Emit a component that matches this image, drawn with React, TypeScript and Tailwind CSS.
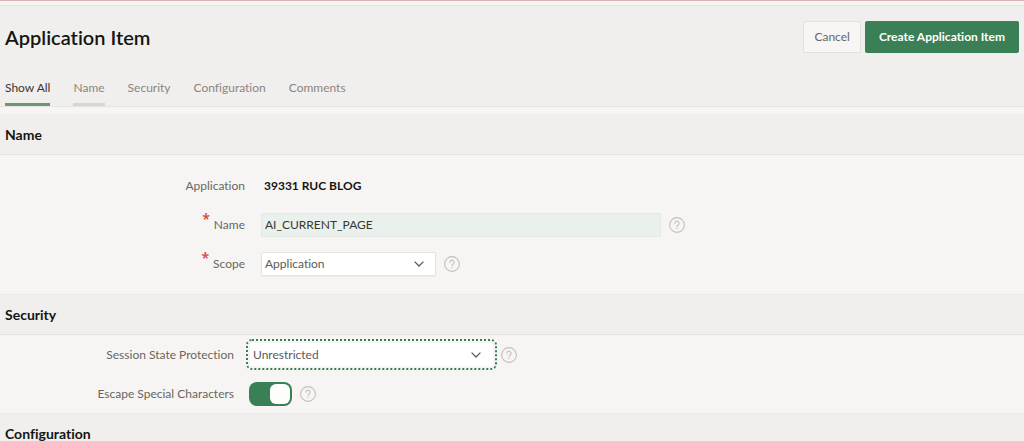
import { useState } from "react";
import type { ReactNode } from "react";

const tabs = ["Show All", "Name", "Security", "Configuration", "Comments"];

const tabClassNames = {
  active: "border-[#6b9a6c] text-[#3a3632]",
  hovered: "border-[#d9d5d1] text-[#8b8580]",
  idle: "border-transparent text-[#8b8580]",
};

const HelpButton = ({ label }: { label: string }) => (
  <button
    type="button"
    aria-label={`Help: ${label}`}
    className="flex-none text-[#c4c0bc]"
  >
    <svg viewBox="0 0 16 16" className="block h-4 w-4" fill="none">
      <circle cx="8" cy="8" r="7.4" stroke="currentColor" strokeWidth="1.1" />
      <path
        d="M5.9 6.3a2.1 2.1 0 1 1 3.3 1.7C8.4 8.5 8 8.8 8 9.7"
        stroke="currentColor"
        strokeWidth="1.1"
        strokeLinecap="round"
      />
      <circle cx="8" cy="11.6" r="0.7" fill="currentColor" />
    </svg>
  </button>
);

interface SelectProps {
  id: string;
  options: string[];
  className: string;
}

const Select = ({ id, options, className }: SelectProps) => (
  <div className="relative flex">
    <select
      id={id}
      className={`appearance-none rounded-xs bg-white text-[#5d5955] ${className}`}
    >
      {options.map((o) => (
        <option key={o}>{o}</option>
      ))}
    </select>
    <svg
      viewBox="0 0 10 6"
      className="pointer-events-none absolute top-1/2 right-3 h-1.5 w-2.5 -translate-y-1/2"
      fill="none"
      stroke="#5d5955"
      strokeWidth="1.3"
    >
      <path d="M0.6 0.6 5 5 9.4 0.6" />
    </svg>
  </div>
);

interface FieldLabelProps {
  htmlFor: string;
  required?: boolean;
  className: string;
  children: ReactNode;
}

const FieldLabel = ({
  htmlFor,
  required,
  className,
  children,
}: FieldLabelProps) => (
  <label
    htmlFor={htmlFor}
    className={`flex flex-none justify-end gap-1 text-[#6a6561] ${className}`}
  >
    {required && (
      <span className="-mt-1 font-['Noto_Sans',sans-serif] text-sm leading-3 font-semibold text-[#cf4b45]">
        *
      </span>
    )}
    {children}
  </label>
);

const Row = ({ children }: { children: ReactNode }) => (
  <div className="flex h-[39px] items-center">{children}</div>
);

const SectionTitle = ({ children }: { children: ReactNode }) => (
  <h2 className="flex h-[41px] items-center border-y border-t-[#ecebe8] border-b-[#e6e4e2] bg-[#f0efed] px-[5px] text-sm font-bold text-[#161513]">
    {children}
  </h2>
);

const App = () => {
  const [name, setName] = useState("AI_CURRENT_PAGE");
  const [escape, setEscape] = useState(true);

  return (
    <div className="h-screen overflow-hidden border-t border-[#d9b3b3] bg-[#f6f5f3] pt-1 font-['Lato','Noto_Sans',sans-serif] text-xs [font-variant-ligatures:none]">
      <header className="border-y border-[#e6e4e2] bg-[#f0efed] px-[5px]">
        <div className="flex h-[62px] items-center justify-between">
          <h1 className="text-xl font-semibold text-[#161513]">
            Application Item
          </h1>
          <div className="flex gap-1">
            <button
              type="button"
              className="h-8 rounded-xs border border-[#e2e0dd] bg-[#f7f6f4] px-2.5 text-[#6a6561]"
            >
              Cancel
            </button>
            <button
              type="button"
              className="h-8 rounded-xs bg-[#3a7f55] px-3.5 font-bold text-white"
            >
              Create Application Item
            </button>
          </div>
        </div>
        <nav className="flex gap-[23px] pt-1">
          {tabs.map((t, i) => (
            <a
              key={t}
              href="#"
              className={`flex h-[34px] items-center border-b-3 ${
                i === 0
                  ? tabClassNames.active
                  : i === 1
                    ? tabClassNames.hovered
                    : tabClassNames.idle
              }`}
            >
              {t}
            </a>
          ))}
        </nav>
      </header>
      <section className="pt-[7px]">
        <SectionTitle>Name</SectionTitle>
        <div className="py-[11px]">
          <Row>
            <span className="w-[245px] text-right text-[#6a6561]">
              Application
            </span>
            <span className="pl-[19px] font-bold text-[#161513]">
              39331 RUC BLOG
            </span>
          </Row>
          <Row>
            <FieldLabel htmlFor="name" required className="w-[245px]">
              Name
            </FieldLabel>
            <div className="flex items-center gap-2 pl-4">
              <input
                id="name"
                type="text"
                value={name}
                onChange={(e) => setName(e.target.value)}
                className="h-6 w-[400px] rounded-xs border border-[#e3e8e3] bg-[#eaf1ec] px-[3px] text-[#3a3632]"
              />
              <HelpButton label="Name" />
            </div>
          </Row>
          <Row>
            <FieldLabel htmlFor="scope" required className="w-[245px]">
              Scope
            </FieldLabel>
            <div className="flex items-center gap-2 pl-4">
              <Select
                id="scope"
                options={["Application", "Global"]}
                className="h-6 w-[175px] border border-[#e6e4e2] px-[3px] shadow-xs"
              />
              <HelpButton label="Scope" />
            </div>
          </Row>
        </div>
      </section>
      <section>
        <SectionTitle>Security</SectionTitle>
        <div>
          <Row>
            <FieldLabel htmlFor="protection" className="w-[234px]">
              Session State Protection
            </FieldLabel>
            <div className="flex items-center gap-2 pl-4">
              <Select
                id="protection"
                options={["Unrestricted", "Restricted"]}
                className="h-[23px] w-[243px] px-[3px] outline-2 outline-offset-2 outline-[#3a7f55] outline-dotted"
              />
              <HelpButton label="Session State Protection" />
            </div>
          </Row>
          <Row>
            <FieldLabel htmlFor="escape" className="w-[234px]">
              Escape Special Characters
            </FieldLabel>
            <div className="flex items-center gap-2 pl-[15px]">
              <input
                id="escape"
                type="checkbox"
                role="switch"
                checked={escape}
                onChange={(e) => setEscape(e.target.checked)}
                className="flex h-6 w-[43px] appearance-none items-center rounded-lg bg-[#b5b1ad] px-0.5 before:h-5 before:w-5 before:rounded-md before:bg-[#fdfdfc] checked:justify-end checked:bg-[#3a7f55]"
              />
              <HelpButton label="Escape Special Characters" />
            </div>
          </Row>
        </div>
      </section>
      <section>
        <SectionTitle>Configuration</SectionTitle>
      </section>
    </div>
  );
};

export default App;
